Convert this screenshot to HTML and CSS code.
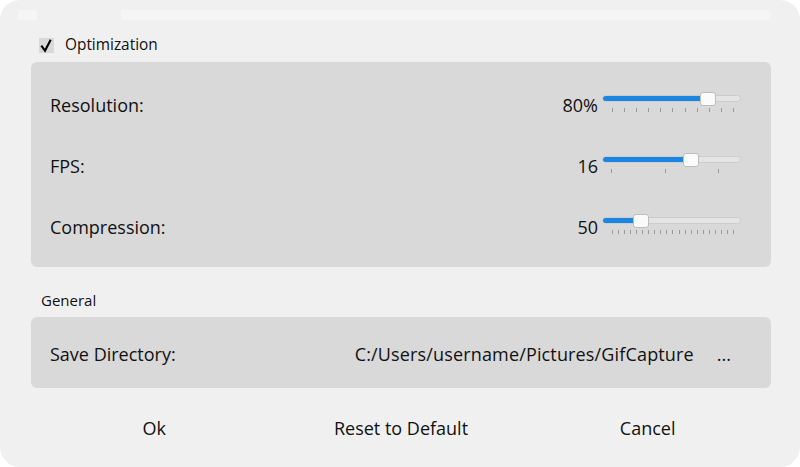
FILE: index.html
```html
<!DOCTYPE html>
<html>
<head>
<meta charset="utf-8">
<link rel="stylesheet" href="styles.css">
</head>
<body>
<div class="window">
  <div class="topband"><span class="band band-a"></span><span class="band band-b"></span></div>
  <div class="check-row">
    <span class="checkbox"><svg width="15" height="15" viewBox="0 0 15 15"><path d="M2.3 7.7 L6 12.7 L11.7 1.7" fill="none" stroke="#000" stroke-width="2.1" stroke-linejoin="miter"/></svg></span>
    <span class="check-label">Optimization</span>
  </div>
  <div class="panel panel-opt">
    <div class="row">
      <span class="label">Resolution:</span>
      <span class="value">80%</span>
      <div class="slider">
        <div class="track"><div class="fill" style="width:104px"></div></div>
        <div class="handle" style="left:98px"></div>
        <div class="ticks">
          <i></i><i></i><i></i><i></i><i></i><i></i><i></i><i></i><i></i><i></i><i></i>
        </div>
      </div>
    </div>
    <div class="row">
      <span class="label">FPS:</span>
      <span class="value">16</span>
      <div class="slider">
        <div class="track"><div class="fill" style="width:87px"></div></div>
        <div class="handle" style="left:81px"></div>
        <div class="ticks ticks-fps">
          <i></i><i></i><i></i>
        </div>
      </div>
    </div>
    <div class="row">
      <span class="label">Compression:</span>
      <span class="value">50</span>
      <div class="slider">
        <div class="track"><div class="fill" style="width:37px"></div></div>
        <div class="handle" style="left:31px"></div>
        <div class="ticks">
          <i></i><i></i><i></i><i></i><i></i><i></i><i></i><i></i><i></i><i></i><i></i><i></i><i></i><i></i><i></i><i></i><i></i><i></i><i></i><i></i><i></i>
        </div>
      </div>
    </div>
  </div>
  <div class="section-title">General</div>
  <div class="panel panel-general">
    <span class="label">Save Directory:</span>
    <span class="path">C:/Users/username/Pictures/GifCapture</span>
    <span class="browse">...</span>
  </div>
  <div class="buttons">
    <span class="btn">Ok</span>
    <span class="btn">Reset to Default</span>
    <span class="btn">Cancel</span>
  </div>
</div>
</body>
</html>
```
FILE: styles.css
```css
html, body {
  margin: 0;
  padding: 0;
  background: #ffffff;
}
body {
  font-family: "Open Sans", "Noto Sans", sans-serif;
  color: #111111;
}
.window {
  width: 800px;
  height: 467px;
  box-sizing: border-box;
  background: #f0f0f0;
  border-radius: 20px;
  padding: 10px 29px 0 31px;
  overflow: hidden;
}
.topband {
  display: flex;
  height: 10px;
  margin: 0 -30px 0 -13px;
  padding-right: 30px;
}
.band {
  display: block;
  height: 10px;
  background: #f5f5f5;
}
.band-a {
  width: 19px;
}
.band-b {
  flex: 1;
  margin-left: 84px;
  border-radius: 0 4px 4px 0;
}
.check-row {
  display: flex;
  align-items: center;
  margin-top: 15px;
  height: 20px;
  margin-bottom: 7px;
}
.checkbox {
  display: block;
  width: 15px;
  height: 15px;
  margin-left: 8px;
  margin-top: 1px;
  background: #d9d9d9;
  border: 0;
}
.checkbox svg {
  display: block;
}
.check-label {
  font-size: 15.4px;
  line-height: 20px;
  margin-left: 11px;
}
.panel {
  background: #d9d9d9;
  border-radius: 6px;
  box-sizing: border-box;
}
.panel-opt {
  height: 205px;
  padding: 31px 30px 0 19px;
}
.row {
  display: flex;
  align-items: flex-start;
  height: 61px;
}
.label {
  flex: 1;
  font-size: 18px;
  line-height: 24px;
}
.value {
  font-size: 18px;
  line-height: 24px;
  margin-right: 4px;
}
.slider {
  position: relative;
  width: 139px;
  margin-top: 2px;
}
.track {
  height: 7px;
  box-sizing: border-box;
  border-radius: 4px;
  background: #e4e4e4;
  border: 1px solid #cccccc;
  overflow: hidden;
}
.fill {
  height: 100%;
  background: #1a86e2;
  margin: -1px 0 0 -1px;
  padding-bottom: 2px;
  border-radius: 3px 0 0 3px;
}
.handle {
  position: absolute;
  top: -3px;
  width: 16px;
  height: 14px;
  box-sizing: border-box;
  background: #fbfbfb;
  border: 1px solid #bdbdbd;
  border-radius: 3px;
}
.ticks {
  display: flex;
  justify-content: space-between;
  height: 4px;
  margin-top: 6px;
  padding: 0 7px 0 10px;
}
.ticks i {
  display: block;
  width: 1px;
  height: 4px;
  background: #9a9a9a;
}
.ticks-fps {
  padding: 0 22px 0 9px;
}
.section-title {
  font-size: 15px;
  line-height: 20px;
  margin: 23px 0 0 10px;
  height: 24px;
}
.panel-general {
  display: flex;
  align-items: center;
  height: 71px;
  margin-top: 3px;
  padding: 3px 40px 0 19px;
}
.path {
  font-size: 18px;
  line-height: 24px;
  letter-spacing: 0.15px;
}
.browse {
  font-size: 18px;
  line-height: 24px;
  margin-left: 23px;
}
.buttons {
  display: grid;
  grid-template-columns: 1fr 1fr 1fr;
  margin-top: 28px;
}
.btn {
  text-align: center;
  font-size: 18px;
  line-height: 24px;
}
```
